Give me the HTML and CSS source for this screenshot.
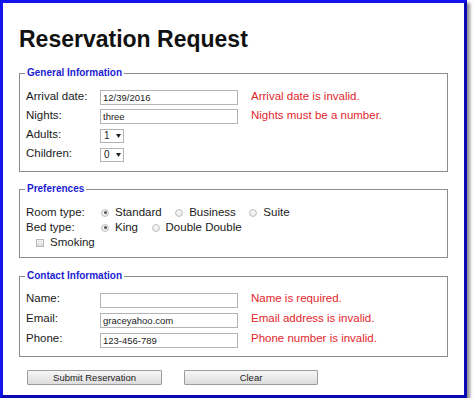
FILE: index.html
```html
<!DOCTYPE html>
<html>
<head>
<meta charset="utf-8">
<link rel="stylesheet" href="styles.css">
</head>
<body>
<div class="frame">
  <h1 class="title">Reservation Request</h1>

  <fieldset class="group group-general">
    <legend class="legend">General Information</legend>
    <div class="grid grid-general">
      <span class="lbl">Arrival date:</span>
      <input class="text-input" type="text" value="12/39/2016">
      <span class="err">Arrival date is invalid.</span>

      <span class="lbl">Nights:</span>
      <input class="text-input" type="text" value="three">
      <span class="err">Nights must be a number.</span>

      <span class="lbl">Adults:</span>
      <span class="select"><span class="select-val">1</span><svg class="arrow" width="5" height="4" viewBox="0 0 5 4"><path d="M0 0H5L2.5 4Z" fill="#222"/></svg></span>
      <span></span>

      <span class="lbl">Children:</span>
      <span class="select"><span class="select-val">0</span><svg class="arrow" width="5" height="4" viewBox="0 0 5 4"><path d="M0 0H5L2.5 4Z" fill="#222"/></svg></span>
      <span></span>
    </div>
  </fieldset>

  <fieldset class="group group-prefs">
    <legend class="legend">Preferences</legend>
    <div class="pref-row">
      <span class="lbl lbl-pref">Room type:</span>
      <span class="options">
        <span class="opt"><span class="radio checked"></span>Standard</span>
        <span class="opt"><span class="radio"></span>Business</span>
        <span class="opt"><span class="radio"></span>Suite</span>
      </span>
    </div>
    <div class="pref-row">
      <span class="lbl lbl-pref">Bed type:</span>
      <span class="options">
        <span class="opt"><span class="radio checked"></span>King</span>
        <span class="opt"><span class="radio"></span>Double Double</span>
      </span>
    </div>
    <div class="pref-row pref-check">
      <span class="opt"><span class="checkbox"></span>Smoking</span>
    </div>
  </fieldset>

  <fieldset class="group group-contact">
    <legend class="legend">Contact Information</legend>
    <div class="grid grid-contact">
      <span class="lbl">Name:</span>
      <input class="text-input" type="text" value="">
      <span class="err">Name is required.</span>

      <span class="lbl">Email:</span>
      <input class="text-input" type="text" value="graceyahoo.com">
      <span class="err">Email address is invalid.</span>

      <span class="lbl">Phone:</span>
      <input class="text-input" type="text" value="123-456-789">
      <span class="err">Phone number is invalid.</span>
    </div>
  </fieldset>

  <div class="buttons">
    <button class="btn btn-submit" type="button">Submit Reservation</button>
    <button class="btn btn-clear" type="button">Clear</button>
  </div>
</div>
</body>
</html>
```
FILE: styles.css
```css
html, body {
  margin: 0;
  padding: 0;
  background: #ffffff;
}

body {
  font-family: "Liberation Sans", Arial, sans-serif;
  color: #1a1a1a;
}

.frame {
  box-sizing: border-box;
  width: 467px;
  height: 398px;
  border-top: 3px solid #1414ee;
  border-left: 3px solid #1414ee;
  border-right: 3px solid #0808b4;
  border-bottom: 3px solid #0808b4;
  box-shadow: 3px 3px 3px rgba(0, 0, 0, 0.45);
  padding: 23px 0 0 16px;
  background: #ffffff;
}

.title {
  margin: 0;
  font-size: 23px;
  line-height: 26px;
  font-weight: bold;
  color: #111111;
}

.group {
  box-sizing: border-box;
  width: 429px;
  margin: 0;
  border: 1px solid #8c8c8c;
  padding: 0 6px 7px 6px;
  min-width: 0;
}

.group-general {
  margin-top: 15px;
  padding-top: 9px;
  padding-bottom: 7px;
}

.group-prefs {
  margin-top: 11px;
  padding-top: 10px;
  padding-bottom: 7px;
}

.group-contact {
  margin-top: 12px;
  padding-top: 8px;
  padding-bottom: 6px;
}

.legend {
  font-size: 10px;
  line-height: 12px;
  font-weight: bold;
  color: #1c1cd2;
  padding: 0 2px;
  margin-left: -1px;
}

.grid {
  display: grid;
  grid-template-columns: 74px 138px auto;
}

.grid-general {
  grid-auto-rows: 19px;
}

.grid-contact {
  grid-auto-rows: 20px;
}

.lbl {
  font-size: 11.5px;
  line-height: 16px;
  align-self: start;
  color: #1a1a1a;
}

.err {
  font-size: 11.5px;
  line-height: 16px;
  align-self: start;
  margin-left: 13px;
  color: #e3262d;
  white-space: nowrap;
}

.text-input {
  box-sizing: border-box;
  width: 138px;
  height: 15px;
  margin: 0;
  align-self: center;
  border: 1px solid #b4b4b4;
  padding: 0 2px;
  font-family: "Liberation Sans", Arial, sans-serif;
  font-size: 9.5px;
  color: #222222;
  background: #ffffff;
  outline: none;
}

.select {
  box-sizing: border-box;
  width: 24px;
  height: 14px;
  align-self: center;
  display: flex;
  align-items: center;
  border: 1px solid #b4b4b4;
  padding: 0 0 0 3px;
  font-size: 10px;
  color: #222222;
  background: #ffffff;
}

.select-val {
  width: 12px;
  line-height: 12px;
}

.arrow {
  display: block;
}

.pref-row {
  display: flex;
  align-items: center;
  height: 15px;
  font-size: 11.5px;
  line-height: 15px;
}

.lbl-pref {
  width: 75px;
  flex: none;
  line-height: 15px;
}

.options {
  display: flex;
  align-items: center;
  gap: 13.5px;
}

.opt {
  display: inline-flex;
  align-items: center;
  font-size: 11.5px;
  line-height: 15px;
  color: #1a1a1a;
}

.radio {
  box-sizing: border-box;
  width: 8px;
  height: 8px;
  border-radius: 50%;
  border: 1px solid #c4c4c4;
  background: radial-gradient(circle at 50% 40%, #fbfbfb, #dedede);
  margin-right: 6px;
  position: relative;
  flex: none;
}

.radio.checked::after {
  content: "";
  position: absolute;
  left: 1.5px;
  top: 1.5px;
  width: 3px;
  height: 3px;
  border-radius: 50%;
  background: #505050;
}

.pref-check {
  padding-left: 10px;
}

.checkbox {
  box-sizing: border-box;
  width: 8px;
  height: 8px;
  border: 1px solid #b8b8b8;
  background: linear-gradient(#f6f6f6, #dcdcdc);
  margin-right: 6px;
  flex: none;
}

.buttons {
  display: flex;
  gap: 22px;
  margin-top: 13px;
  margin-left: 8px;
}

.btn {
  box-sizing: border-box;
  height: 15px;
  margin: 0;
  padding: 0;
  border: 1px solid #9c9c9c;
  border-radius: 1px;
  background: linear-gradient(#f7f7f7, #dcdcdc);
  font-family: "Liberation Sans", Arial, sans-serif;
  font-size: 9.5px;
  line-height: 13px;
  color: #222222;
}

.btn-submit {
  width: 135px;
}

.btn-clear {
  width: 134px;
}
```
